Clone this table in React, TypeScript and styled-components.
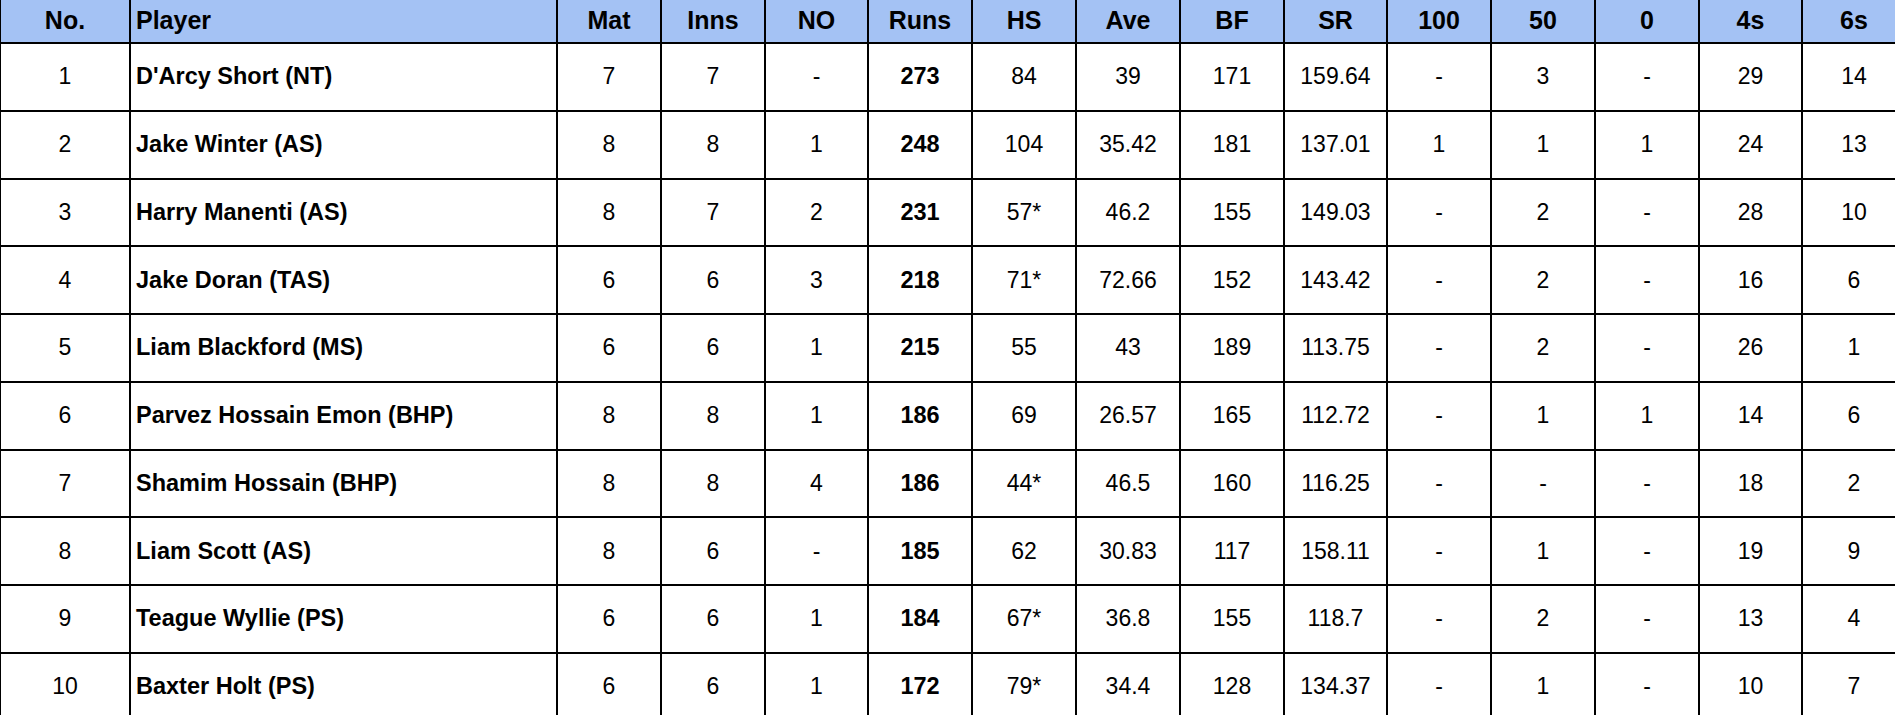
import React from "react";
import styled, { createGlobalStyle } from "styled-components";

const GlobalStyle = createGlobalStyle`
  html, body {
    margin: 0;
    padding: 0;
    background: #ffffff;
  }
  body {
    font-family: "Liberation Sans", Arial, sans-serif;
    color: #000;
  }
`;

const Frame = styled.div`
  width: 1895px;
  height: 715px;
  overflow: hidden;
  background: #fff;
`;

const Table = styled.table`
  border-collapse: collapse;
  table-layout: fixed;
  width: 1906px;
  margin-left: -1px;
  margin-top: -1px;
  font-family: "Liberation Sans", Arial, sans-serif;
`;

const HeadCell = styled.th<{ $left?: boolean }>`
  background: #a4c2f4;
  height: 43px;
  padding: 0;
  padding-left: ${(p) => (p.$left ? "5px" : "0")};
  border: 2px solid #000;
  border-top: none;
  font-size: 25px;
  font-weight: 700;
  text-align: ${(p) => (p.$left ? "left" : "center")};
  vertical-align: middle;
  color: #000;
  white-space: nowrap;
`;

const Cell = styled.td<{ $left?: boolean; $bold?: boolean }>`
  height: 65.75px;
  padding: 0;
  padding-left: ${(p) => (p.$left ? "5px" : "0")};
  border: 2px solid #000;
  font-size: ${(p) => (p.$bold ? "23.5px" : "23px")};
  font-weight: ${(p) => (p.$bold ? 700 : 400)};
  text-align: ${(p) => (p.$left ? "left" : "center")};
  vertical-align: middle;
  color: #000;
  white-space: nowrap;
`;

const widths = [130, 427, 104, 104, 103, 104, 104, 104, 104, 103, 104, 104, 104, 103, 104];
const headers = ["No.", "Player", "Mat", "Inns", "NO", "Runs", "HS", "Ave", "BF", "SR", "100", "50", "0", "4s", "6s"];

const rows: string[][] = [
  ["1", "D'Arcy Short (NT)", "7", "7", "-", "273", "84", "39", "171", "159.64", "-", "3", "-", "29", "14"],
  ["2", "Jake Winter (AS)", "8", "8", "1", "248", "104", "35.42", "181", "137.01", "1", "1", "1", "24", "13"],
  ["3", "Harry Manenti (AS)", "8", "7", "2", "231", "57*", "46.2", "155", "149.03", "-", "2", "-", "28", "10"],
  ["4", "Jake Doran (TAS)", "6", "6", "3", "218", "71*", "72.66", "152", "143.42", "-", "2", "-", "16", "6"],
  ["5", "Liam Blackford (MS)", "6", "6", "1", "215", "55", "43", "189", "113.75", "-", "2", "-", "26", "1"],
  ["6", "Parvez Hossain Emon (BHP)", "8", "8", "1", "186", "69", "26.57", "165", "112.72", "-", "1", "1", "14", "6"],
  ["7", "Shamim Hossain (BHP)", "8", "8", "4", "186", "44*", "46.5", "160", "116.25", "-", "-", "-", "18", "2"],
  ["8", "Liam Scott (AS)", "8", "6", "-", "185", "62", "30.83", "117", "158.11", "-", "1", "-", "19", "9"],
  ["9", "Teague Wyllie (PS)", "6", "6", "1", "184", "67*", "36.8", "155", "118.7", "-", "2", "-", "13", "4"],
  ["10", "Baxter Holt (PS)", "6", "6", "1", "172", "79*", "34.4", "128", "134.37", "-", "1", "-", "10", "7"],
];

export default function App() {
  return (
    <>
      <GlobalStyle />
      <Frame>
        <Table>
          <colgroup>
            {widths.map((w, i) => (
              <col key={i} style={{ width: w }} />
            ))}
          </colgroup>
          <thead>
            <tr>
              {headers.map((h, i) => (
                <HeadCell key={h} $left={i === 1}>
                  {h}
                </HeadCell>
              ))}
            </tr>
          </thead>
          <tbody>
            {rows.map((r) => (
              <tr key={r[0]}>
                {r.map((v, i) => (
                  <Cell key={i} $left={i === 1} $bold={i === 1 || i === 5}>
                    {v}
                  </Cell>
                ))}
              </tr>
            ))}
          </tbody>
        </Table>
      </Frame>
    </>
  );
}
